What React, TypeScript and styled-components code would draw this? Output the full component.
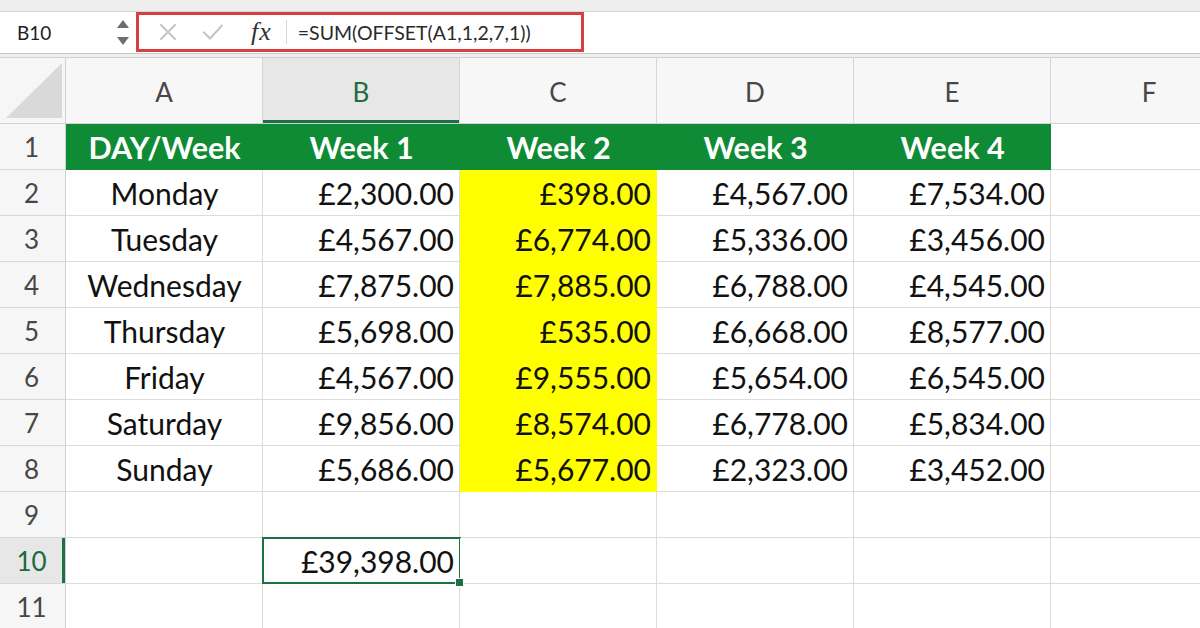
import React from "react";
import styled, { createGlobalStyle } from "styled-components";

const GlobalStyle = createGlobalStyle`
  html, body { margin: 0; padding: 0; background: #ffffff; overflow: hidden; }
  body { font-family: Lato, "Open Sans", "DejaVu Sans", sans-serif; }
`;

const Page = styled.div`
  width: 1200px;
  height: 628px;
  overflow: hidden;
  display: flex;
  flex-direction: column;
  background: #ffffff;
`;

const TopStrip = styled.div`
  flex-shrink: 0;
  height: 11px;
  background: #eeeeee;
  border-bottom: 1px solid #d6d6d6;
`;

const FormulaBar = styled.div`
  flex-shrink: 0;
  height: 41px;
  display: flex;
  align-items: flex-start;
  background: #ffffff;
  border-bottom: 1px solid #c9c9c9;
`;

const NameBox = styled.div`
  width: 134px;
  height: 40px;
  box-sizing: border-box;
  display: flex;
  align-items: center;
  justify-content: space-between;
  padding: 0 5px 0 17px;
  font-size: 19px;
  color: #1e1e1e;
`;

const Spinner = styled.div`
  display: flex;
  flex-direction: column;
  gap: 9px;
`;

const FormulaBox = styled.div`
  margin-left: 2px;
  width: 448px;
  height: 40px;
  box-sizing: border-box;
  border: 3px solid #d6403f;
  display: flex;
  align-items: center;
  padding-left: 19px;
`;

const IconSlot = styled.div<{ $w: number; $mr: number }>`
  width: ${(p) => p.$w}px;
  margin-right: ${(p) => p.$mr}px;
  display: flex;
  align-items: center;
  justify-content: center;
`;

const Fx = styled.span`
  font-family: "Liberation Serif", "DejaVu Serif", serif;
  font-style: italic;
  font-size: 26px;
  color: #333333;
  margin-right: 14px;
  margin-left: 1px;
  letter-spacing: 1px;
  line-height: 1;
`;

const VDivider = styled.div`
  width: 1px;
  height: 24px;
  background: #d8d8d8;
  margin-right: 11px;
`;

const FormulaText = styled.span`
  font-size: 19.5px;
  color: #2a2a2a;
  white-space: nowrap;
`;

const Gutter = styled.div`
  flex-shrink: 0;
  height: 3px;
  background: #efefef;
  border-bottom: 1px solid #d0d0d0;
`;

const Sheet = styled.div`
  display: grid;
  grid-template-columns: 66px repeat(6, 197px);
  grid-template-rows: 66px;
  grid-auto-rows: 46px;
`;

const Corner = styled.div`
  box-sizing: border-box;
  background: #f6f6f6;
  border-right: 1px solid #d2d2d2;
  border-bottom: 1px solid #d2d2d2;
  display: flex;
  align-items: flex-end;
  justify-content: flex-end;
  padding: 0 3px 5px 0;
`;

const ColHeader = styled.div<{ $selected?: boolean }>`
  box-sizing: border-box;
  background: ${(p) => (p.$selected ? "#e7e7e7" : "#f7f7f7")};
  border-right: 1px solid #d6d6d6;
  border-bottom: 1px solid #d2d2d2;
  box-shadow: ${(p) => (p.$selected ? "inset 0 -3px 0 #1d7044" : "none")};
  display: flex;
  align-items: center;
  justify-content: center;
  padding-top: 2px;
  font-size: 26px;
  color: ${(p) => (p.$selected ? "#1d6b40" : "#474747")};
`;

const RowHeader = styled.div<{ $selected?: boolean }>`
  box-sizing: border-box;
  background: ${(p) => (p.$selected ? "#e7e7e7" : "#f6f6f6")};
  border-right: 1px solid #d2d2d2;
  border-bottom: 1px solid #d8d8d8;
  box-shadow: ${(p) => (p.$selected ? "inset -3px 0 0 #1d7044" : "none")};
  display: flex;
  align-items: center;
  justify-content: center;
  padding-right: 2px;
  font-size: 26px;
  color: ${(p) => (p.$selected ? "#1d6b40" : "#474747")};
`;

const Cell = styled.div<{
  $fill?: string;
  $align: "left" | "center" | "right";
  $bold?: boolean;
  $selected?: boolean;
}>`
  position: relative;
  box-sizing: border-box;
  background: ${(p) => p.$fill ?? "#ffffff"};
  border-right: 1px solid ${(p) => p.$fill ?? "#dcdcdc"};
  border-bottom: 1px solid ${(p) => p.$fill ?? "#dcdcdc"};
  display: flex;
  align-items: center;
  justify-content: ${(p) =>
    p.$align === "right" ? "flex-end" : p.$align === "center" ? "center" : "flex-start"};
  padding: 0 5px 0 6px;
  font-size: ${(p) => (p.$bold ? "30.5px" : "30px")};
  font-weight: ${(p) => (p.$bold ? 700 : 400)};
  color: ${(p) => (p.$bold ? "#ffffff" : "#111111")};
  white-space: nowrap;

  ${(p) =>
    p.$selected
      ? `
    &::after {
      content: "";
      position: absolute;
      left: -1px;
      top: -1px;
      right: -2px;
      bottom: -1px;
      border: 2px solid #1d7044;
      pointer-events: none;
    }
    &::before {
      content: "";
      position: absolute;
      right: -5px;
      bottom: -4px;
      width: 7px;
      height: 7px;
      background: #1d7044;
      border: 1px solid #ffffff;
      z-index: 2;
    }
  `
      : ""}
`;

const GREEN = "#0f8a35";
const YELLOW = "#ffff00";

type CellDef = {
  text?: string;
  align: "left" | "center" | "right";
  fill?: string;
  bold?: boolean;
  selected?: boolean;
};

const columns = ["A", "B", "C", "D", "E", "F"];

const data: string[][] = [
  ["Monday", "£2,300.00", "£398.00", "£4,567.00", "£7,534.00"],
  ["Tuesday", "£4,567.00", "£6,774.00", "£5,336.00", "£3,456.00"],
  ["Wednesday", "£7,875.00", "£7,885.00", "£6,788.00", "£4,545.00"],
  ["Thursday", "£5,698.00", "£535.00", "£6,668.00", "£8,577.00"],
  ["Friday", "£4,567.00", "£9,555.00", "£5,654.00", "£6,545.00"],
  ["Saturday", "£9,856.00", "£8,574.00", "£6,778.00", "£5,834.00"],
  ["Sunday", "£5,686.00", "£5,677.00", "£2,323.00", "£3,452.00"],
];

const buildRows = (): CellDef[][] => {
  const rows: CellDef[][] = [];
  const headers = ["DAY/Week", "Week 1", "Week 2", "Week 3", "Week 4"];
  rows.push([
    ...headers.map((h) => ({ text: h, align: "center" as const, fill: GREEN, bold: true })),
    { align: "left" },
  ]);
  data.forEach((r) => {
    rows.push([
      { text: r[0], align: "center" },
      { text: r[1], align: "right" },
      { text: r[2], align: "right", fill: YELLOW },
      { text: r[3], align: "right" },
      { text: r[4], align: "right" },
      { align: "left" },
    ]);
  });
  rows.push(columns.map(() => ({ align: "left" as const })));
  rows.push([
    { align: "left" },
    { text: "£39,398.00", align: "right", selected: true },
    { align: "left" },
    { align: "left" },
    { align: "left" },
    { align: "left" },
  ]);
  rows.push(columns.map(() => ({ align: "left" as const })));
  return rows;
};

const rows = buildRows();

const CancelIcon = () => (
  <svg width="20" height="20" viewBox="0 0 20 20">
    <path d="M3 3 L17 17 M17 3 L3 17" stroke="#c6c6c6" strokeWidth="2.2" strokeLinecap="round" fill="none" />
  </svg>
);

const CheckIcon = () => (
  <svg width="22" height="18" viewBox="0 0 22 18">
    <path d="M2 9.5 L8 15.5 L20 2.5" stroke="#c6c6c6" strokeWidth="2.2" strokeLinecap="round" strokeLinejoin="round" fill="none" />
  </svg>
);

const SpinArrow = ({ up }: { up?: boolean }) => (
  <svg width="12" height="8" viewBox="0 0 12 8">
    <path d={up ? "M6 0 L12 8 L0 8 Z" : "M0 0 L12 0 L6 8 Z"} fill="#6d6d6d" />
  </svg>
);

const CornerTriangle = () => (
  <svg width="56" height="55" viewBox="0 0 56 55">
    <path d="M0 55 L56 55 L56 0 Z" fill="#d9d9d9" />
  </svg>
);

export default function App() {
  return (
    <Page>
      <GlobalStyle />
      <TopStrip />
      <FormulaBar>
        <NameBox>
          <span>B10</span>
          <Spinner>
            <SpinArrow up />
            <SpinArrow />
          </Spinner>
        </NameBox>
        <FormulaBox>
          <IconSlot $w={20} $mr={24}>
            <CancelIcon />
          </IconSlot>
          <IconSlot $w={22} $mr={26}>
            <CheckIcon />
          </IconSlot>
          <Fx>fx</Fx>
          <VDivider />
          <FormulaText>=SUM(OFFSET(A1,1,2,7,1))</FormulaText>
        </FormulaBox>
      </FormulaBar>
      <Gutter />
      <Sheet>
        <Corner>
          <CornerTriangle />
        </Corner>
        {columns.map((c) => (
          <ColHeader key={c} $selected={c === "B"}>
            {c}
          </ColHeader>
        ))}
        {rows.map((row, ri) => (
          <React.Fragment key={ri}>
            <RowHeader $selected={ri + 1 === 10}>{ri + 1}</RowHeader>
            {row.map((cell, ci) => (
              <Cell
                key={ci}
                $align={cell.align}
                $fill={cell.fill}
                $bold={cell.bold}
                $selected={cell.selected}
              >
                {cell.text}
              </Cell>
            ))}
          </React.Fragment>
        ))}
      </Sheet>
    </Page>
  );
}
